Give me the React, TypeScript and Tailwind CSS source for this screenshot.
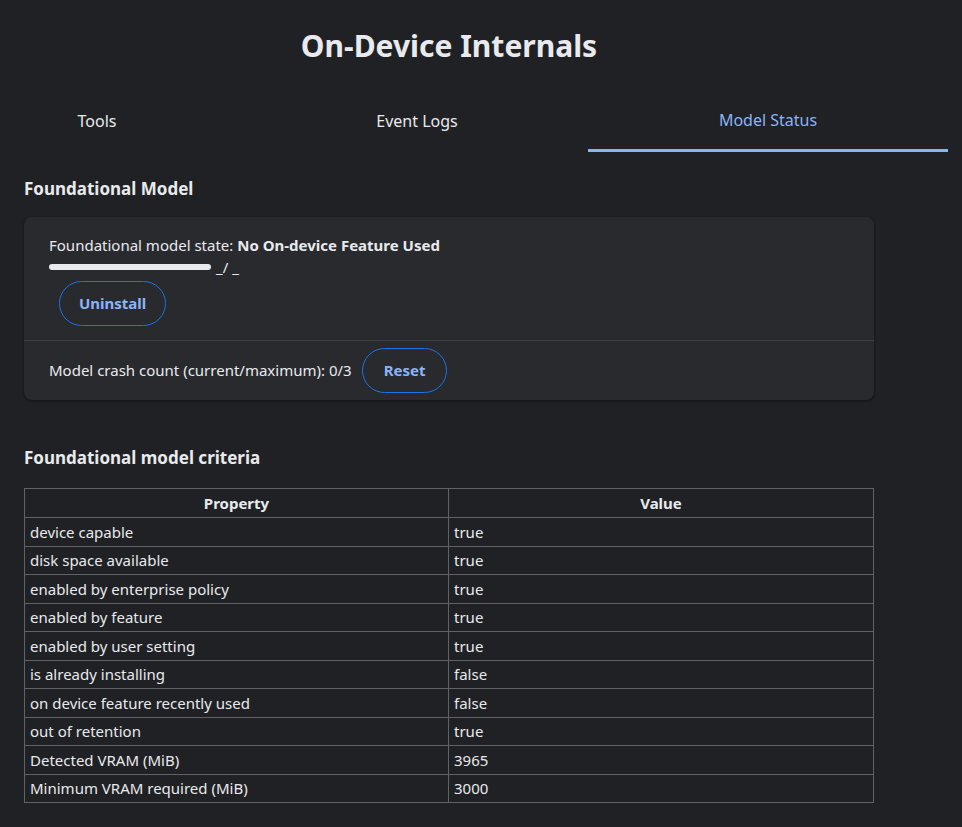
export default function App() {
  const rows: [string, string][] = [
    ["device capable", "true"],
    ["disk space available", "true"],
    ["enabled by enterprise policy", "true"],
    ["enabled by feature", "true"],
    ["enabled by user setting", "true"],
    ["is already installing", "false"],
    ["on device feature recently used", "false"],
    ["out of retention", "true"],
    ["Detected VRAM (MiB)", "3965"],
    ["Minimum VRAM required (MiB)", "3000"],
  ];
  return (
    <div className="min-h-[827px] bg-[#202124] text-[#e8eaed] text-[15px]" style={{ fontFamily: '"Noto Sans", "Open Sans", sans-serif' }}>
      <h1 className="pt-[24px] h-[94px] text-center text-[30px] font-bold leading-[44px] pr-[64px]">On-Device Internals</h1>
      <div className="flex h-[58px] text-[16px] w-[948px]">
        <div className="w-[194px] flex items-center justify-center pb-[4px]">Tools</div>
        <div className="w-[52px]" />
        <div className="w-[342px] flex items-center justify-center pb-[4px]">Event Logs</div>
        <div className="w-[360px] flex items-center justify-center pb-[4px] text-[#8ab4f8] border-b-[3px] border-[#8ab4f8]">Model Status</div>
      </div>
      <div className="px-[24px]">
        <h2 className="mt-[25px] text-[17px] font-bold leading-[24px]">Foundational Model</h2>
        <div className="mt-[16px] w-[850px] rounded-[8px] bg-[#292a2d] shadow-[0_1px_3px_rgba(0,0,0,0.5)]">
          <div className="px-[25px] pt-[18px] pb-[14px]">
            <div className="leading-[20px]">Foundational model state: <b>No On-device Feature Used</b></div>
            <div className="flex items-center gap-[5px] mt-[5px] h-[14px]">
              <div className="w-[162px] h-[6px] rounded-full bg-[#e8eaed]" />
              <span className="leading-[14px]">_/ _</span>
            </div>
            <button className="mt-[7px] ml-[10px] h-[45px] px-[19px] rounded-full border border-[#1a73e8] text-[#8ab4f8] font-bold">Uninstall</button>
          </div>
          <div className="border-t border-[#3c3d40] px-[25px] h-[60px] flex items-center gap-[10px]">
            <span>Model crash count (current/maximum): 0/3</span>
            <button className="h-[45px] px-[21px] rounded-full border border-[#1a73e8] text-[#8ab4f8] font-bold">Reset</button>
          </div>
        </div>
        <h2 className="mt-[46px] text-[17px] font-bold leading-[24px]">Foundational model criteria</h2>
        <table className="mt-[18px] w-[850px] border-collapse">
          <thead>
            <tr className="h-[29px]">
              <th className="border border-[#5f6368] w-[424px] font-bold text-center">Property</th>
              <th className="border border-[#5f6368] font-bold text-center">Value</th>
            </tr>
          </thead>
          <tbody>
            {rows.map(([k, v]) => (
              <tr key={k} className="h-[28.5px]">
                <td className="border border-[#5f6368] px-[5px] py-0 leading-[20px]">{k}</td>
                <td className="border border-[#5f6368] px-[5px] py-0 leading-[20px]">{v}</td>
              </tr>
            ))}
          </tbody>
        </table>
      </div>
    </div>
  );
}
